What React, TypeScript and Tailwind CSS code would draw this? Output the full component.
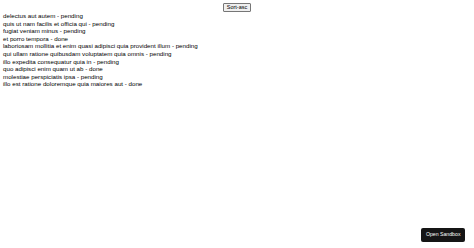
const todos = [
  ['delectus aut autem', 'pending'],
  ['quis ut nam facilis et officia qui', 'pending'],
  ['fugiat veniam minus', 'pending'],
  ['et porro tempora', 'done'],
  ['laboriosam mollitia et enim quasi adipisci quia provident illum', 'pending'],
  ['qui ullam ratione quibusdam voluptatem quia omnis', 'pending'],
  ['illo expedita consequatur quia in', 'pending'],
  ['quo adipisci enim quam ut ab', 'done'],
  ['molestiae perspiciatis ipsa', 'pending'],
  ['illo est ratione doloremque quia maiores aut', 'done'],
];

export default function App() {
  return (
    <div className="relative h-[248px] w-[474px] bg-white font-['Liberation_Sans',Arial,sans-serif] text-black">
      <div className="flex justify-center pt-[3px]">
        <button className="h-[9px] rounded-[1px] border border-[#767676] bg-[#efefef] px-[3px] text-[5.5px] leading-[7px]">
          Sort-asc
        </button>
      </div>
      <ul className="pl-[3px] pt-[0px] text-[6.2px] leading-[7.6px]">
        {todos.map(([title, status]) => (
          <li key={title}>
            {title} - {status}
          </li>
        ))}
      </ul>
      <button className="absolute bottom-[6px] right-[9px] h-[14px] rounded-[2px] bg-[#151515] px-[4.5px] text-[5.2px] text-white">
        Open Sandbox
      </button>
    </div>
  );
}
